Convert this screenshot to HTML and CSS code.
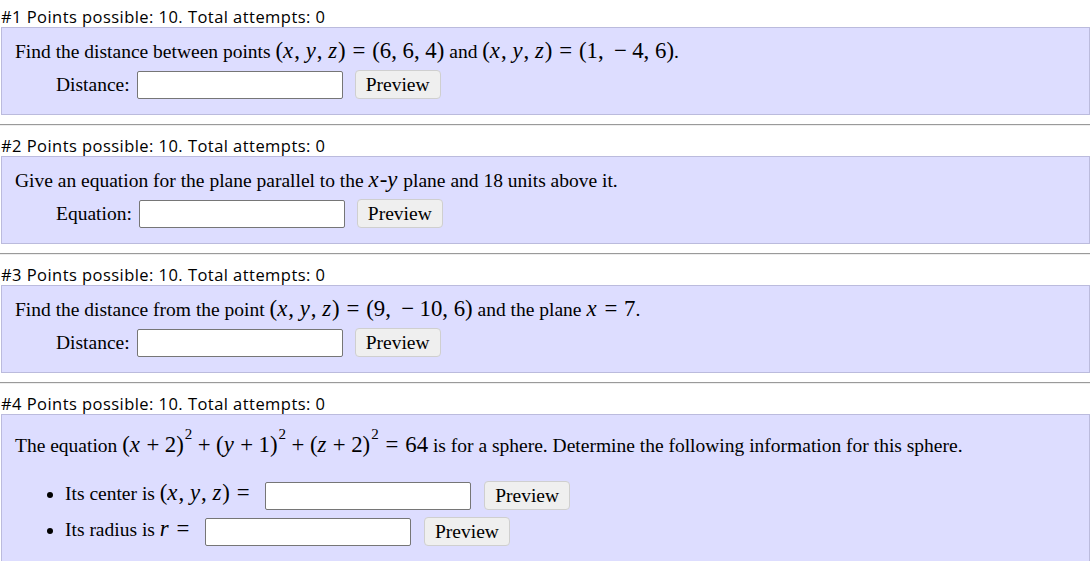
FILE: index.html
```html
<!DOCTYPE html>
<html lang="en">
<head>
  <meta charset="UTF-8" />
  <title>Problem Set</title>
  <link rel="stylesheet" href="styles.css">
</head>
<body>
  <!-- Problem 1 -->
  <div class="problem">
    <div class="problem-head">#1 Points possible: 10. Total attempts: 0</div>
    <div class="problem-body">
      <p class="prompt">Find the distance between points <span class="math">(<i>x</i>, <i>y</i>, <i>z</i>)<span class="rel">=</span>(6, 6, 4)</span> and <span class="math">(<i>x</i>, <i>y</i>, <i>z</i>)<span class="rel">=</span>(1, <span class="neg">−</span>4, 6)</span>.</p>
      <div class="answer-row">
        <label>Distance:</label>
        <input class="answer" type="text">
        <button class="preview">Preview</button>
      </div>
    </div>
  </div>
  <hr>

  <!-- Problem 2 -->
  <div class="problem">
    <div class="problem-head">#2 Points possible: 10. Total attempts: 0</div>
    <div class="problem-body">
      <p class="prompt">Give an equation for the plane parallel to the <span class="math"><i>x</i>-<i>y</i></span> plane and 18 units above it.</p>
      <div class="answer-row">
        <label>Equation:</label>
        <input class="answer" type="text">
        <button class="preview">Preview</button>
      </div>
    </div>
  </div>
  <hr>

  <!-- Problem 3 -->
  <div class="problem">
    <div class="problem-head">#3 Points possible: 10. Total attempts: 0</div>
    <div class="problem-body">
      <p class="prompt">Find the distance from the point <span class="math">(<i>x</i>, <i>y</i>, <i>z</i>)<span class="rel">=</span>(9, <span class="neg">−</span>10, 6)</span> and the plane <span class="math"><i>x</i><span class="rel">=</span>7</span>.</p>
      <div class="answer-row">
        <label>Distance:</label>
        <input class="answer" type="text">
        <button class="preview">Preview</button>
      </div>
    </div>
  </div>
  <hr>

  <!-- Problem 4 -->
  <div class="problem">
    <div class="problem-head">#4 Points possible: 10. Total attempts: 0</div>
    <div class="problem-body tall">
      <p class="prompt">The equation <span class="math">(<i>x</i><span class="bin">+</span>2)<sup>2</sup><span class="bin">+</span>(<i>y</i><span class="bin">+</span>1)<sup>2</sup><span class="bin">+</span>(<i>z</i><span class="bin">+</span>2)<sup>2</sup><span class="rel">=</span>64</span> is for a sphere. Determine the following information for this sphere.</p>
      <ul class="parts">
        <li>Its center is <span class="math">(<i>x</i>, <i>y</i>, <i>z</i>)<span class="rel">=</span></span> <input class="answer" type="text"> <button class="preview">Preview</button></li>
        <li>Its radius is <span class="math"><i>r</i><span class="rel">=</span></span> <input class="answer" type="text"> <button class="preview">Preview</button></li>
      </ul>
    </div>
  </div>
</body>
</html>
```

FILE: styles.css
```css
/* Page */
body {
  margin: 0;
  padding: 7px 0 0 0;
  background: #fff;
  color: #000;
  font-family: 'Liberation Serif', 'Times New Roman', serif;
  overflow: hidden;
}

/* Problem header */
.problem-head {
  font-family: 'Open Sans', 'Lato', sans-serif;
  font-size: 16.5px;
  letter-spacing: 0.45px;
  line-height: 20px;
  height: 20px;
  padding-left: 1px;
  color: #000;
}

/* Problem body */
.problem-body {
  margin-left: 1px;
  background: #ddddff;
  border: 1px solid #bbbbdd;
  padding: 9px 13px 15px 13px;
  font-size: 19.5px;
}
.problem-body.tall {
  padding-top: 16px;
  padding-bottom: 40px;
}

.prompt {
  margin: 0;
  line-height: 28px;
}

/* Math */
.math {
  white-space: nowrap;
  font-size: 1.17em;
}
.math i {
  font-style: italic;
  padding-right: 1px;
}
.rel {
  margin: 0 0.3em;
}
.bin {
  margin: 0 0.24em;
}
.neg {
  margin: 0 0.24em 0 0.2em;
}
sup {
  font-size: 0.66em;
  line-height: 0;
  vertical-align: 0.85em;
  margin-left: 1px;
}

/* Answer rows */
.answer-row {
  display: flex;
  align-items: center;
  gap: 7px;
  margin-top: 4px;
  padding-left: 41px;
}
.answer-row .preview {
  margin-left: 5px;
}

.answer {
  width: 206px;
  height: 28px;
  box-sizing: border-box;
  border: 1px solid #767676;
  border-radius: 2px;
  background: #fff;
  padding: 1px 2px;
  font-size: 16px;
  vertical-align: middle;
}

.preview {
  height: 29px;
  padding: 0 10px;
  box-sizing: border-box;
  border: 1px solid #cfcfcf;
  border-radius: 4px;
  background: #efefef;
  color: #000;
  font-family: 'Liberation Serif', 'Times New Roman', serif;
  font-size: 19.5px;
  vertical-align: middle;
}

/* Parts list */
.parts {
  margin: 15px 0 0 0;
  padding-left: 50px;
}
.parts li {
  line-height: 35px;
}
.parts .answer {
  margin: 0 8px 0 4px;
}

hr {
  margin: 9px 0 10px 0;
  height: 0;
  border: 0;
  border-top: 1px solid #9a9a9a;
  border-bottom: 1px solid #eeeeee;
}
```
